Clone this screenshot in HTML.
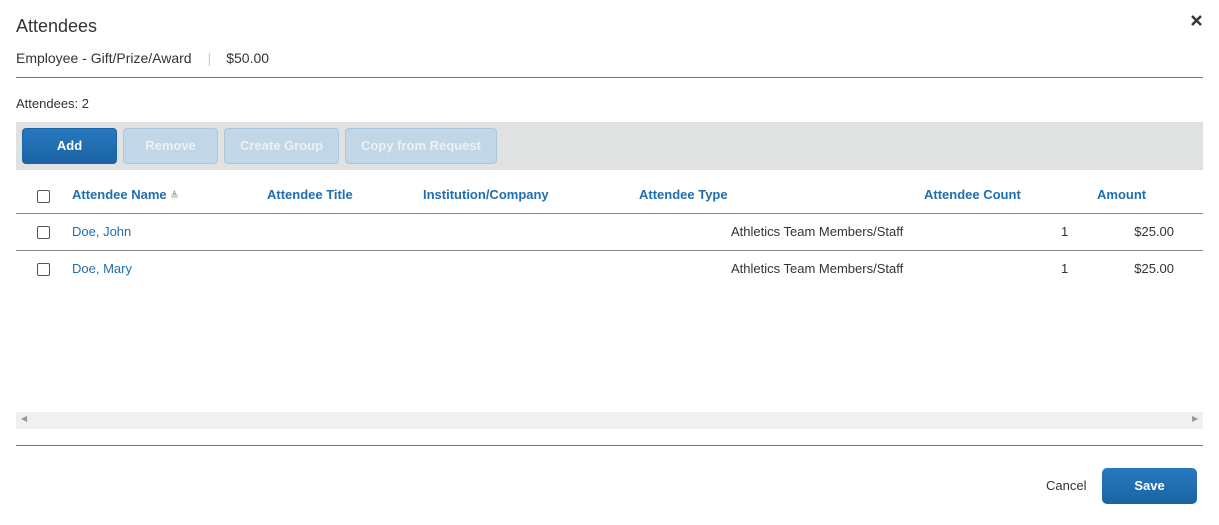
<!DOCTYPE html>
<html><head><style>
*{box-sizing:border-box;margin:0;padding:0}
body{width:1219px;height:525px;background:#fff;font-family:"Liberation Sans",Arial,sans-serif;color:#333;position:relative;overflow:hidden;font-size:13px}
.a{position:absolute}
.btn{position:absolute;top:128px;height:36px;border-radius:4px;font-weight:bold;font-size:13px;text-align:center;line-height:34px}
.dis{background:#c1d6e7;border:1px solid #a9c6e0;color:#eaf1f7}
.hd{position:absolute;top:187px;color:#1f6fb0;font-weight:bold;font-size:13px}
.cb{position:absolute;left:37px;width:13px;height:13px;border:1px solid #555;border-radius:2px;background:#fff}
.lnk{color:#1f6fb0}
.amt{position:absolute;right:45px;width:80px;text-align:right}
</style></head><body>
<div class="a" style="left:16px;top:16px;font-size:18px;color:#333">Attendees</div>
<svg class="a" style="left:1191px;top:15px" width="11" height="11" viewBox="0 0 11 11"><path d="M1 1L10 10M10 1L1 10" stroke="#333" stroke-width="2.4"/></svg>
<div class="a" style="left:16px;top:50px;font-size:14px">Employee - Gift/Prize/Award<span style="color:#ccc;margin:0 15px 0 16px">|</span>$50.00</div>
<div class="a" style="left:16px;top:77px;width:1187px;height:1px;background:#777"></div>
<div class="a" style="left:16px;top:96px;font-size:13px">Attendees: 2</div>
<div class="a" style="left:16px;top:122px;width:1187px;height:48px;background:#e0e1e1"></div>
<div class="btn" style="left:22px;width:95px;background:linear-gradient(#2878c0,#1b64a3);color:#fff;border:1px solid #1b64a3">Add</div>
<div class="btn dis" style="left:123px;width:95px">Remove</div>
<div class="btn dis" style="left:224px;width:115px">Create Group</div>
<div class="btn dis" style="left:345px;width:152px">Copy from Request</div>
<div class="cb" style="top:190px"></div>
<div class="hd" style="left:72px">Attendee Name <span style="font-size:10px;color:#888;font-weight:normal">≜</span></div>
<div class="hd" style="left:267px">Attendee Title</div>
<div class="hd" style="left:423px">Institution/Company</div>
<div class="hd" style="left:639px">Attendee Type</div>
<div class="hd" style="left:924px">Attendee Count</div>
<div class="hd" style="left:1097px">Amount</div>
<div class="a" style="left:16px;top:213px;width:1187px;height:1px;background:#888"></div>
<div class="cb" style="top:226px"></div>
<div class="a lnk" style="left:72px;top:224px">Doe, John</div>
<div class="a" style="left:731px;top:224px">Athletics Team Members/Staff</div>
<div class="a" style="left:1061px;top:224px">1</div>
<div class="amt" style="top:224px">$25.00</div>
<div class="a" style="left:16px;top:250px;width:1187px;height:1px;background:#888"></div>
<div class="cb" style="top:263px"></div>
<div class="a lnk" style="left:72px;top:261px">Doe, Mary</div>
<div class="a" style="left:731px;top:261px">Athletics Team Members/Staff</div>
<div class="a" style="left:1061px;top:261px">1</div>
<div class="amt" style="top:261px">$25.00</div>
<div class="a" style="left:16px;top:412px;width:1187px;height:17px;background:#f0f0f0"></div>
<div class="a" style="left:21px;top:414px;font-size:8px;color:#999">◀</div>
<div class="a" style="left:1192px;top:414px;font-size:8px;color:#999">▶</div>
<div class="a" style="left:16px;top:445px;width:1187px;height:1px;background:#777"></div>
<div class="a" style="left:1046px;top:478px;font-size:13px">Cancel</div>
<div class="a" style="left:1102px;top:468px;width:95px;height:36px;border-radius:5px;background:linear-gradient(#2878c0,#1b64a3);color:#fff;font-weight:bold;text-align:center;line-height:36px">Save</div>
</body></html>
